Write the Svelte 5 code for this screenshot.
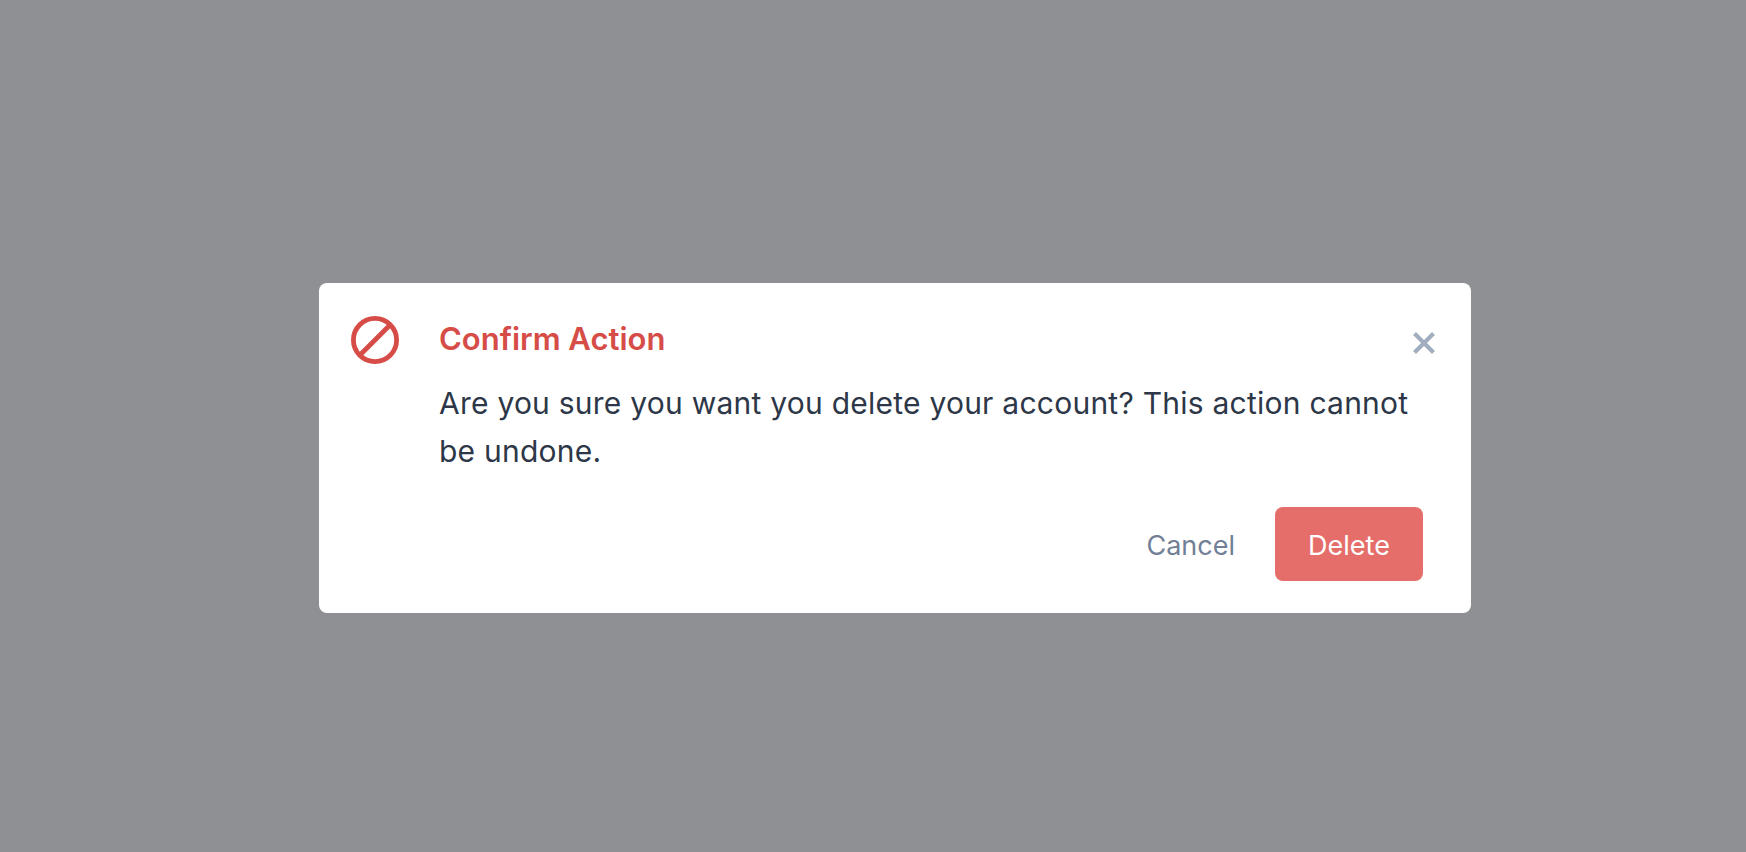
<script lang="ts">
  // Confirmation dialog over a dimmed page
  let open = $state(true);
</script>

<div class="overlay">
  {#if open}
    <div class="dialog" role="dialog" aria-labelledby="dlg-title">
      <svg class="ban" viewBox="0 0 48 48" fill="none" stroke="currentColor" stroke-width="4.8" aria-hidden="true">
        <circle cx="24" cy="24" r="21.6" />
        <path d="M9 39 39 9" />
      </svg>
      <div class="body">
        <div class="head">
          <h2 id="dlg-title">Confirm Action</h2>
          <button class="close" aria-label="Close" onclick={() => (open = false)}>
            <svg viewBox="0 0 22 22" fill="none" stroke="currentColor" stroke-width="4.2" aria-hidden="true">
              <path d="M1.5 1.5 20.5 20.5M20.5 1.5 1.5 20.5" />
            </svg>
          </button>
        </div>
        <p>Are you sure you want you delete your account? This action cannot be undone.</p>
        <div class="actions">
          <button class="cancel" onclick={() => (open = false)}>Cancel</button>
          <button class="delete">Delete</button>
        </div>
      </div>
    </div>
  {/if}
</div>

<style>
  :global(body) { margin: 0; }

  .overlay {
    height: 852px;
    box-sizing: border-box;
    padding: 283px 275px 0 319px;
    background: #8f9094;
    font-family: Inter, "Liberation Sans", sans-serif;
  }
  .dialog {
    display: flex;
    box-sizing: border-box;
    height: 330px;
    padding: 32px 36px 32px 32px;
    background: #fff;
    border-radius: 8px;
  }
  .ban { flex: none; width: 48px; height: 48px; margin-top: 1px; color: #d64c47; }
  .body { flex: 1; margin-left: 40px; }
  .head { display: flex; justify-content: space-between; align-items: flex-start; }
  h2 {
    margin: 4px 0 0;
    font-size: 31px;
    line-height: 40px;
    font-weight: 600;
    color: #d64c47;
  }
  .close {
    display: flex;
    padding: 0;
    margin-top: 17px;
    border: 0;
    background: none;
    color: #a0aec0;
    cursor: pointer;
  }
  .close svg { width: 22px; height: 22px; }
  p {
    margin: 20px 24px 0 0;
    font-size: 30px;
    letter-spacing: 0.24px;
    line-height: 48px;
    color: #2d3748;
  }
  .actions {
    display: flex;
    justify-content: flex-end;
    align-items: center;
    gap: 40px;
    margin: 32px 12px 0 0;
  }
  button { font: inherit; }
  .cancel {
    padding: 2px 0 0;
    border: 0;
    background: none;
    font-size: 27px;
    color: #718096;
    cursor: pointer;
  }
  .delete {
    width: 148px;
    height: 74px;
    padding: 2px 0 0;
    border: 0;
    border-radius: 8px;
    background: #e56e6a;
    font-size: 27px;
    color: #fff;
    cursor: pointer;
  }
</style>
